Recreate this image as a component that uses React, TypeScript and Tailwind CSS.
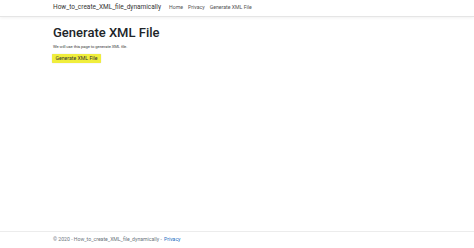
import * as React from "react";

export default function App() {
  return (
    <div className="flex h-[248px] flex-col bg-white text-[#212529] [font-family:Roboto,'Noto_Sans',sans-serif]">
      {/* Navbar */}
      <header className="h-[17px] border-b border-[#e5e5e5] shadow-[0_1px_3px_rgba(0,0,0,0.06)]">
        <div className="mx-auto flex h-full w-[368px] items-center">
          <span className="mr-[8px] text-[6.5px] text-[#333]">
            How_to_create_XML_file_dynamically
          </span>
          <nav className="flex gap-[5px] text-[5.2px] text-[#555]">
            <a>Home</a>
            <a>Privacy</a>
            <a>Generate XML File</a>
          </nav>
        </div>
      </header>

      {/* Main */}
      <main className="mx-auto w-[368px] flex-1 pt-[7px]">
        <h1 className="text-[13px] font-medium leading-[17px] text-[#212529]">
          Generate XML File
        </h1>
        <p className="mt-[2px] text-[4.2px] leading-[7px] tracking-[-0.1px] text-[#444]">
          We will use this page to generate XML file.
        </p>
        <button
          type="button"
          className="mt-[4px] -ml-px flex h-[9px] w-[49px] items-center justify-center rounded-[1px] bg-[#f0ee3c] text-[5.2px] text-[#333] shadow-[0_0_1px_rgba(0,0,0,0.3)]"
        >
          Generate XML File
        </button>
      </main>

      {/* Footer */}
      <footer className="h-[17px] border-t border-[#ececec]">
        <div className="mx-auto flex h-full w-[368px] items-center text-[5.15px] text-[#6c757d]">
          <span>© 2020 - How_to_create_XML_file_dynamically - </span>
          <a className="ml-[2px] text-[#1b6ec2]">Privacy</a>
        </div>
      </footer>
    </div>
  );
}
